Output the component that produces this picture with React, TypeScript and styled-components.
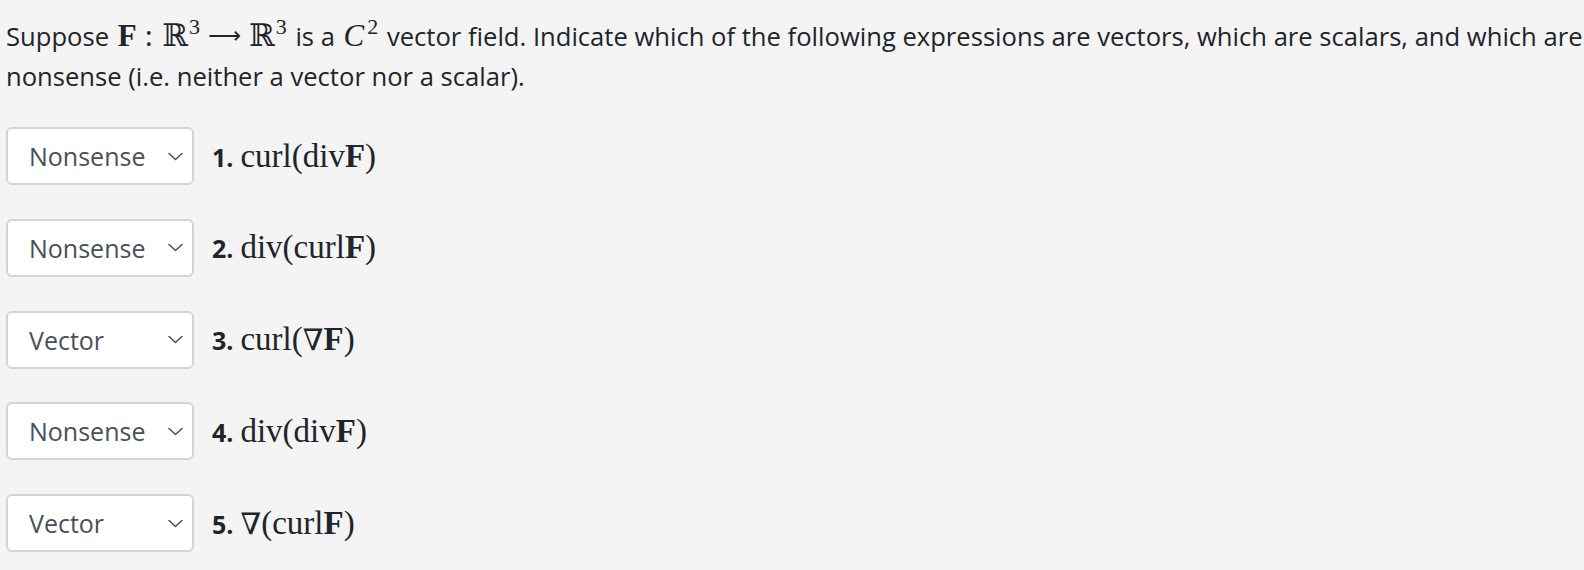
import React from "react";
import styled, { createGlobalStyle } from "styled-components";

const Global = createGlobalStyle`
  html, body { margin: 0; padding: 0; background: #f4f4f4; }
  body { font-family: "Open Sans", "Noto Sans", sans-serif; color: #212529; }
`;

const Page = styled.div`
  padding: 15px 6px 0 6px;
  width: 1584px;
  box-sizing: border-box;
`;

const Prompt = styled.p`
  margin: 0 0 30px 0;
  font-size: 25.6px;
  line-height: 40px;
`;

const Line = styled.span`
  display: block;
  white-space: nowrap;
`;

const M = styled.span`
  font-family: "Liberation Serif", "DejaVu Serif", serif;
  font-size: 31px;
  margin: 0 2px;
`;

const MB = styled.b`
  font-family: "Liberation Serif", "DejaVu Serif", serif;
  font-weight: 700;
`;

const MI = styled.i`
  font-family: "Liberation Serif", "DejaVu Serif", serif;
  margin-right: 2px;
`;

const Colon = styled.span`
  margin: 0 9px 0 8px;
`;

const Nabla = styled.span`
  font-family: "DejaVu Serif", serif;
  font-weight: 400;
  font-size: 0.9em;
`;

const Arrow = styled.span`
  font-family: "DejaVu Sans", sans-serif;
  font-size: 23px;
  vertical-align: 3px;
  margin: 0 8px 0 8px;
`;

const Sup = styled.sup`
  font-size: 22px;
  vertical-align: 12px;
  line-height: 0;
  margin-left: 1px;
`;

const List = styled.div`
  display: flex;
  flex-direction: column;
  gap: 33.8px;
`;

const Row = styled.div`
  display: flex;
  align-items: center;
  gap: 18px;
`;

const SelectBox = styled.div`
  width: 188px;
  height: 58px;
  flex: none;
  box-sizing: border-box;
  background: #fff;
  border: 2px solid #d4d4d4;
  border-radius: 6px;
  display: flex;
  align-items: center;
  justify-content: space-between;
  padding: 0 9px 0 21px;
  font-size: 25px;
  color: #495057;
`;

const Label = styled.div`
  display: flex;
  align-items: baseline;
  gap: 7px;
`;

const Num = styled.span`
  font-weight: 700;
  font-size: 25px;
`;

const Expr = styled.span`
  font-family: "Liberation Serif", "DejaVu Serif", serif;
  font-size: 33px;
`;

const Chevron = () => (
  <svg width="15" height="9" viewBox="0 0 15 9" fill="none">
    <path d="M1 1.5 L7.5 7.5 L14 1.5" stroke="#495057" strokeWidth="1.5" strokeLinecap="round" strokeLinejoin="round" />
  </svg>
);

const items: { value: string; num: string; expr: React.ReactNode }[] = [
  { value: "Nonsense", num: "1.", expr: <>curl(div<MB>F</MB>)</> },
  { value: "Nonsense", num: "2.", expr: <>div(curl<MB>F</MB>)</> },
  { value: "Vector", num: "3.", expr: <>curl(<Nabla>∇</Nabla><MB>F</MB>)</> },
  { value: "Nonsense", num: "4.", expr: <>div(div<MB>F</MB>)</> },
  { value: "Vector", num: "5.", expr: <><Nabla>∇</Nabla>(curl<MB>F</MB>)</> },
];

export default function App() {
  return (
    <>
      <Global />
      <Page>
        <Prompt>
          <Line>
            Suppose <M><MB>F</MB><Colon>:</Colon>ℝ<Sup>3</Sup><Arrow>⟶</Arrow>ℝ<Sup>3</Sup></M> is a <M><MI>C</MI><Sup>2</Sup></M> vector field. Indicate which of the following expressions are vectors, which are scalars, and which are
          </Line>
          <Line>nonsense (i.e. neither a vector nor a scalar).</Line>
        </Prompt>
        <List>
          {items.map((it, i) => (
            <Row key={i}>
              <SelectBox>
                <span>{it.value}</span>
                <Chevron />
              </SelectBox>
              <Label>
                <Num>{it.num}</Num>
                <Expr>{it.expr}</Expr>
              </Label>
            </Row>
          ))}
        </List>
      </Page>
    </>
  );
}
